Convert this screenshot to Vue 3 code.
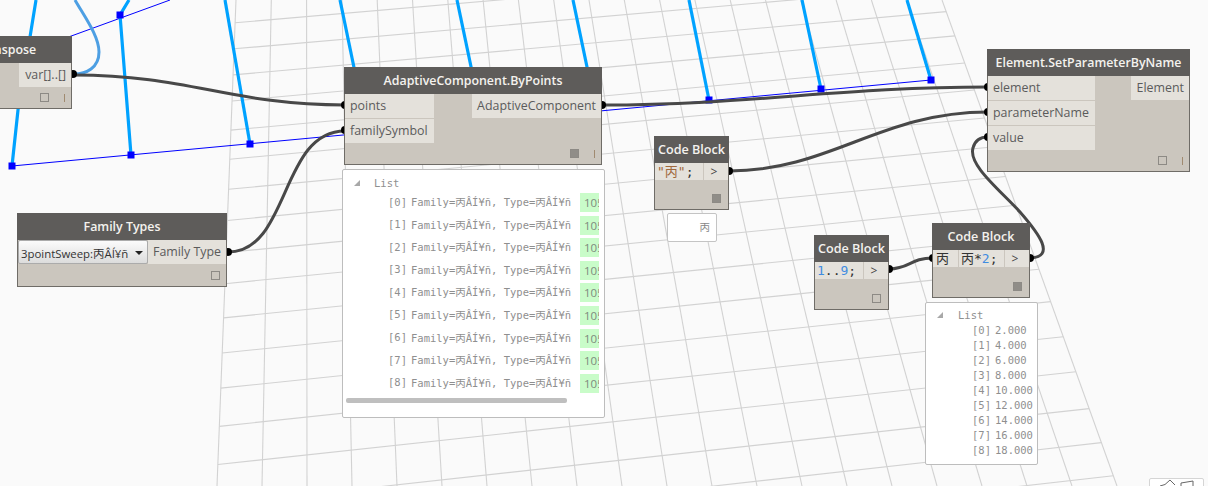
<script setup>
// grid: a perspective plane, every line is worked out from its two ends
const leftAt = (i, y) => {
  const top = 236 + 35.3 * i
  const bottom = 217 + 45 * i
  return top + ((bottom - top) * y) / 486
}
const gridV = Array.from({ length: 21 }, (_, i) => ({ x1: leftAt(i, 0), x2: leftAt(i, 486) }))
const rowStarts = [-2, 23, 49, 75, 101, 130, 159, 189, 220, 252, 283, 317, 352, 387, 425, 463, 503, 540, 576]
const gridH = rowStarts.map((y0) => {
  const slope = 0.085 + y0 * 0.00005
  const yAt = (x) => y0 - slope * (x - 232)
  let a = 232
  let b = 942
  for (let n = 0; n < 4; n++) {
    a = leftAt(0, yAt(a))
    b = leftAt(20, yAt(b))
  }
  return { x1: a, y1: yAt(a), x2: b, y2: yAt(b) }
})

const spokes = [
  '12,166 18,110 30,37 36,0',
  '131,155 120,15 129,0',
  '250,144 225,0',
  '340,0 368,135',
  '457,0 478,100',
  '573,0 596,110',
  '709,100 689,0',
  '821,89 802,0',
  '931,80 907,0'
]
const points = [
  [12, 166], [131, 155], [250, 144], [120, 15], [709, 100], [821, 89], [931, 80]
]

const wires = [
  'M74 75 C190 75 230 105 345 105',
  'M228 252 C290 252 280 131 345 131',
  'M602 105 C750 105 840 87 988 87',
  'M729 171 C830 171 880 112 988 112',
  'M1031 258 C1055 256 1040 235 1020 212 C1000 190 968 165 973 148 C975 140 980 137 988 137',
  'M889 269 C910 269 910 258 933 258'
]
const dots = [
  [73, 74], [345, 105], [345, 130], [228, 252], [602, 105], [988, 87], [988, 112],
  [988, 137], [729, 171], [889, 269], [933, 258], [1030, 258]
]

const nodes = [
  {
    title: 'List.Transpose', left: -86, top: 36, width: 158, height: 73, inWidth: 0, outWidth: 52,
    inputs: [], outputs: ['var[]..[]'], filled: false, bar: true
  },
  {
    title: 'AdaptiveComponent.ByPoints', left: 344, top: 67, width: 258, height: 98, inWidth: 89, outWidth: 129,
    inputs: ['points', 'familySymbol'], outputs: ['AdaptiveComponent'], filled: true, bar: true
  },
  {
    title: 'Element.SetParameterByName', left: 987, top: 49, width: 203, height: 123, inWidth: 107, outWidth: 58,
    inputs: ['element', 'parameterName', 'value'], outputs: ['Element'], filled: false, bar: true
  }
]

const familyRows = Array.from({ length: 9 }, (_, i) => i)
const numberRows = ['2.000', '4.000', '6.000', '8.000', '10.000', '12.000', '14.000', '16.000', '18.000']
</script>

<template>
  <div class="canvas">
    <svg class="layer" width="1208" height="486">
      <g class="grid">
        <line v-for="(l, i) in gridV" :key="'v' + i" :x1="l.x1" y1="0" :x2="l.x2" y2="486" />
        <line v-for="(l, i) in gridH" :key="'h' + i" :x1="l.x1" :y1="l.y1" :x2="l.x2" :y2="l.y2" />
      </g>
      <line x1="12" y1="166" x2="931" y2="80" class="edge" />
      <line x1="0" y1="62" x2="170" y2="0" class="edge" />
      <polyline v-for="(s, i) in spokes" :key="'s' + i" :points="s" class="spoke" />
      <rect v-for="(p, i) in points" :key="'p' + i" :x="p[0] - 3.5" :y="p[1] - 3.5" width="7" height="7" fill="#0000ff" />
      <path d="M75 0 C84 16 99 36 99 52 C99 68 86 74 74 74" class="loop" />
      <path v-for="(w, i) in wires" :key="'w' + i" :d="w" class="wire" />
      <circle v-for="(d, i) in dots" :key="'d' + i" :cx="d[0]" :cy="d[1]" r="4" fill="#000" />
    </svg>

    <div
      v-for="n in nodes"
      :key="n.title"
      class="node"
      :style="{ left: n.left + 'px', top: n.top + 'px', width: n.width + 'px', height: n.height + 'px' }"
    >
      <div class="head">{{ n.title }}</div>
      <div class="ports">
        <div class="col" :style="{ width: n.inWidth + 'px' }">
          <div v-for="p in n.inputs" :key="p" class="cell">{{ p }}</div>
        </div>
        <div class="col" :style="{ width: n.outWidth + 'px' }">
          <div v-for="p in n.outputs" :key="p" class="cell out">{{ p }}</div>
        </div>
      </div>
      <div class="foot">
        <span class="box" :class="{ filled: n.filled }"></span>
        <span v-if="n.bar" class="bar"></span>
      </div>
    </div>

    <div class="node family">
      <div class="head">Family Types</div>
      <div class="ports">
        <div class="drop">
          <span>3pointSweep:丙ÂÍ¥ñ</span>
          <i class="caret"></i>
        </div>
        <div class="cell out grow">Family Type</div>
      </div>
      <div class="foot"><span class="box"></span></div>
    </div>

    <div class="node code c1">
      <div class="head">Code Block</div>
      <div class="code-row">
        <div class="src grow"><span class="str">"丙"</span>;</div>
        <div class="arrow">&gt;</div>
      </div>
      <div class="foot"><span class="box filled"></span></div>
    </div>
    <div class="note">丙</div>

    <div class="node code c2">
      <div class="head">Code Block</div>
      <div class="code-row">
        <div class="src grow"><span class="num">1</span>..<span class="num">9</span>;</div>
        <div class="arrow">&gt;</div>
      </div>
      <div class="foot"><span class="box"></span></div>
    </div>

    <div class="node code c3">
      <div class="head">Code Block</div>
      <div class="code-row">
        <div class="src first">丙</div>
        <div class="src grow">丙*<span class="num">2</span>;</div>
        <div class="arrow">&gt;</div>
      </div>
      <div class="foot"><span class="box filled"></span></div>
    </div>

    <div class="preview families">
      <div class="list-head"><i class="tri"></i>List</div>
      <div v-for="i in familyRows" :key="i" class="fam-row">
        <span class="idx">[{{ i }}]</span>
        <span class="val">Family=丙ÂÍ¥ñ, Type=丙ÂÍ¥ñ</span>
        <span class="id">105</span>
      </div>
      <div class="scroll"></div>
    </div>

    <div class="preview numbers">
      <div class="list-head"><i class="tri"></i>List</div>
      <div v-for="(v, i) in numberRows" :key="v" class="num-row">
        <span class="idx">[{{ i }}]</span>
        <span class="val">{{ v }}</span>
      </div>
    </div>

    <div class="tools">
      <svg width="52" height="8">
        <path d="M10 7 L15 5.5 L20 1 L25 6 M31 7 V4 L43 2 V7" fill="none" stroke="#666" />
      </svg>
    </div>
  </div>
</template>

<style scoped>
.canvas {
  position: relative;
  width: 1208px;
  height: 486px;
  overflow: hidden;
  background: #fafafa;
  font-family: "Open Sans", "Noto Sans CJK SC", sans-serif;
}

.layer {
  position: absolute;
  left: 0;
  top: 0;
}

.grid line {
  stroke: #d2d2d2;
  stroke-width: 1.1;
}

.edge {
  stroke: #0000ff;
  stroke-width: 1;
}

.spoke {
  fill: none;
  stroke: #00a2ff;
  stroke-width: 3.2;
}

.loop {
  fill: none;
  stroke: #4d9fe3;
  stroke-width: 3;
}

.wire {
  fill: none;
  stroke: #484848;
  stroke-width: 3;
}

.node {
  position: absolute;
  box-sizing: border-box;
  display: flex;
  flex-direction: column;
  background: #cbc6be;
  border: 1px solid #6f6c67;
  border-top: 0;
}

.head {
  flex: 0 0 25px;
  margin: 0 -1px;
  background: #5e5c5a;
  color: #f4f2ee;
  font-size: 12.4px;
  font-weight: 600;
  line-height: 27px;
  text-align: center;
  white-space: nowrap;
}

.code .head {
  font-size: 12.6px;
}

.ports {
  display: flex;
  justify-content: space-between;
}

.col {
  display: flex;
  flex-direction: column;
  gap: 1px;
}

.cell {
  height: 24px;
  padding-left: 5px;
  background: #e4e1db;
  color: #5b5b5b;
  font-size: 12.4px;
  line-height: 24px;
  white-space: nowrap;
}

.cell.out {
  padding: 0 5px 0 0;
  text-align: right;
}

.grow {
  flex: 1;
}

.foot {
  margin-top: auto;
  display: flex;
  justify-content: flex-end;
  align-items: center;
  gap: 15px;
  height: 22px;
  padding-right: 6px;
}

.box {
  box-sizing: border-box;
  width: 9px;
  height: 9px;
  border: 1px solid #8d8a85;
}

.box.filled {
  background: #908d88;
}

.bar {
  width: 1.5px;
  height: 8px;
  background: #a08a70;
}

.family {
  left: 17px;
  top: 213px;
  width: 210px;
  height: 74px;
}

.drop {
  box-sizing: border-box;
  display: flex;
  align-items: center;
  justify-content: space-between;
  width: 130px;
  height: 24px;
  padding: 1px 4px 0 2px;
  border: 1px solid #ababab;
  border-radius: 2px;
  background: linear-gradient(#fbfbfb, #dcdcdc);
  color: #333;
  font-size: 11.4px;
  white-space: nowrap;
}

.caret {
  width: 0;
  height: 0;
  border: 4px solid transparent;
  border-top-color: #222;
  border-bottom: 0;
}

.code-row {
  display: flex;
  gap: 1px;
  height: 17px;
}

.src {
  background: #e4e1db;
  color: #333;
  font-family: "DejaVu Sans Mono", "Noto Sans CJK SC", monospace;
  font-size: 13px;
  line-height: 18px;
  padding-left: 2px;
  white-space: nowrap;
}

.src.first {
  width: 22px;
  padding-left: 3px;
}

.str {
  color: #a0683c;
}

.num {
  color: #3f8ce0;
}

.arrow {
  box-sizing: border-box;
  flex: 0 0 24px;
  padding-right: 4px;
  background: #e4e1db;
  color: #444;
  font-size: 12px;
  line-height: 18px;
  text-align: center;
}

.code .foot {
  padding-right: 7px;
}

.c1 {
  left: 654px;
  top: 136px;
  width: 75px;
  height: 74px;
}

.c2 {
  left: 814px;
  top: 235px;
  width: 75px;
  height: 75px;
}

.c3 {
  left: 932px;
  top: 223px;
  width: 98px;
  height: 75px;
}

.note {
  position: absolute;
  left: 667px;
  top: 213px;
  box-sizing: border-box;
  width: 50px;
  height: 29px;
  padding-right: 6px;
  border: 1px solid #c4c4c4;
  border-radius: 2px;
  background: #fff;
  color: #888;
  font-size: 10.5px;
  line-height: 27px;
  text-align: right;
}

.preview {
  position: absolute;
  box-sizing: border-box;
  border: 1px solid #bdbdbd;
  border-radius: 2px;
  background: #fff;
  color: #8f8f8f;
  font-family: "DejaVu Sans Mono", "Noto Sans CJK SC", monospace;
  font-size: 10.5px;
  white-space: nowrap;
}

.families {
  left: 342px;
  top: 169px;
  width: 263px;
  height: 249px;
  padding-top: 6px;
}

.numbers {
  left: 925px;
  top: 302px;
  width: 113px;
  height: 163px;
  padding-top: 5px;
}

.list-head {
  position: relative;
  height: 15px;
  line-height: 15px;
  padding-left: 31px;
}

.numbers .list-head {
  padding-left: 32px;
}

.tri {
  position: absolute;
  left: 11px;
  top: 4px;
  width: 0;
  height: 0;
  border-bottom: 6px solid #a8a8a8;
  border-left: 6px solid transparent;
}

.fam-row {
  display: flex;
  align-items: center;
  height: 19px;
  margin: 0 0 3.6px 45px;
}

.list-head + .fam-row {
  margin-top: 2px;
}

.idx {
  width: 23px;
}

.fam-row .idx,
.fam-row .val {
  padding-bottom: 2px;
}

.fam-row .val {
  width: 169px;
}

.id {
  width: 19px;
  height: 19px;
  overflow: hidden;
  padding-left: 4px;
  box-sizing: border-box;
  background: #c9fcc9;
  color: #7d8a7d;
  font-family: "Open Sans", sans-serif;
  font-size: 11.5px;
  line-height: 19px;
}

.scroll {
  width: 221px;
  height: 5px;
  margin: 5px 0 0 3px;
  border-radius: 2px;
  background: #bfbfbf;
}

.num-row {
  display: flex;
  height: 15.05px;
  line-height: 15px;
  padding-left: 46px;
}

.tools {
  position: absolute;
  left: 1149px;
  top: 478px;
  width: 53px;
  height: 20px;
  border: 1px solid #d5d5d5;
  border-radius: 2px;
  background: #fff;
}

.tools svg {
  display: block;
}
</style>

<style>
body {
  overflow: hidden;
}
</style>
